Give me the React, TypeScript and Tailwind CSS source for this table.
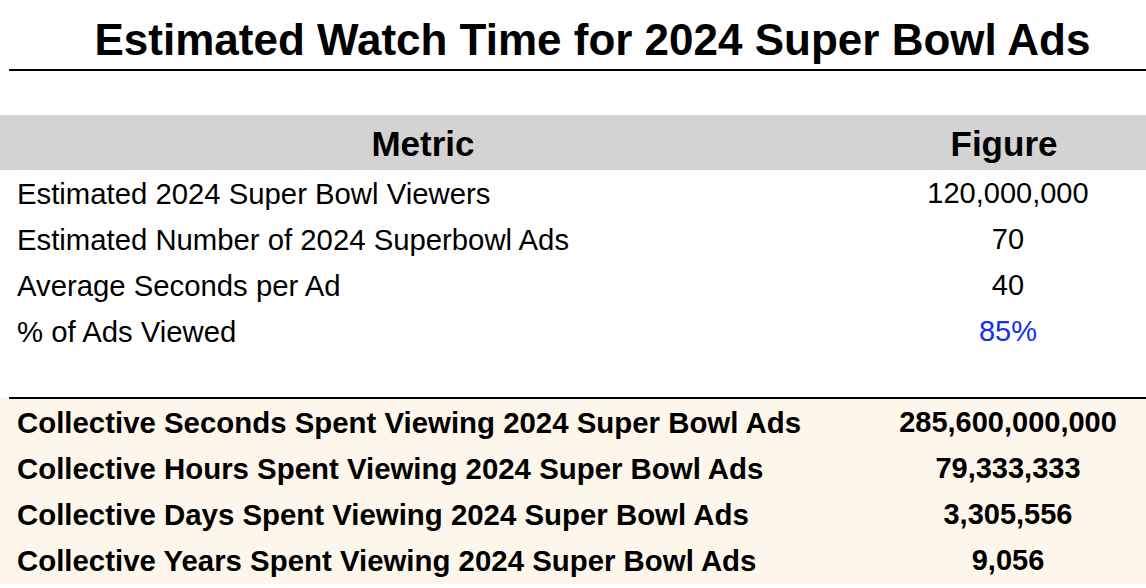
import React from "react";

const rows = [
  ["Estimated 2024 Super Bowl Viewers", "120,000,000", false],
  ["Estimated Number of 2024 Superbowl Ads", "70", false],
  ["Average Seconds per Ad", "40", false],
  ["% of Ads Viewed", "85%", true],
] as const;

const totals = [
  ["Collective Seconds Spent Viewing 2024 Super Bowl Ads", "285,600,000,000"],
  ["Collective Hours Spent Viewing 2024 Super Bowl Ads", "79,333,333"],
  ["Collective Days Spent Viewing 2024 Super Bowl Ads", "3,305,556"],
  ["Collective Years Spent Viewing 2024 Super Bowl Ads", "9,056"],
];

export default function App() {
  return (
    <div
      className="w-[1146px] h-[588px] bg-white text-black overflow-hidden"
      style={{ fontFamily: '"Liberation Sans", Arial, sans-serif' }}
    >
      <div className="h-[69px] pt-[18px] pl-[39px] text-center">
        <h1 className="text-[44px] font-bold leading-[44px] whitespace-nowrap">
          Estimated Watch Time for 2024 Super Bowl Ads
        </h1>
      </div>
      <div className="ml-[9px] h-[2px] bg-black" />
      <div className="h-[44px]" />
      <div className="grid grid-cols-[846px_1fr] h-[55px] bg-[#d3d3d3] items-center text-[35px] font-bold pt-[3px]">
        <div className="text-center">Metric</div>
        <div className="text-center pl-[16px]">Figure</div>
      </div>
      {rows.map(([label, value, blue]) => (
        <div key={label} className="grid grid-cols-[846px_1fr] h-[46px] items-center text-[29px] pt-[1px]">
          <div className="pl-[17px] whitespace-nowrap text-[29.3px]">{label}</div>
          <div className={"text-center pl-[24px] " + (blue ? "text-[#1230f5]" : "")}>{value}</div>
        </div>
      ))}
      <div className="h-[43px]" />
      <div className="bg-[#fdf6ea] h-[187px]">
        <div className="ml-[9px] h-[2px] bg-black" />
        {totals.map(([label, value]) => (
          <div key={label} className="grid grid-cols-[846px_1fr] h-[46px] items-center text-[29px] font-bold pt-[2px]">
            <div className="pl-[17px] whitespace-nowrap text-[29.4px]">{label}</div>
            <div className="text-center pl-[24px]">{value}</div>
          </div>
        ))}
      </div>
    </div>
  );
}
